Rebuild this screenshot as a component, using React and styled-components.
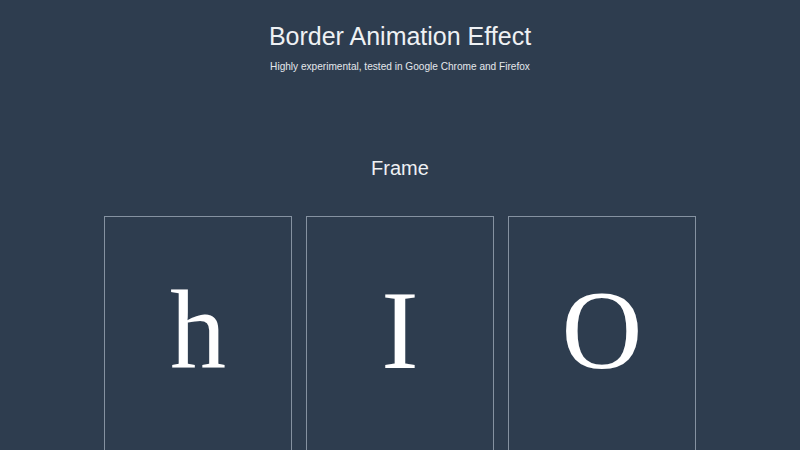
import React from "react";
import styled, { createGlobalStyle } from "styled-components";

const Global = createGlobalStyle`
  html, body {
    margin: 0;
    padding: 0;
    background: #2e3d4f;
    overflow: hidden;
  }
`;

const Page = styled.div`
  width: 800px;
  height: 450px;
  overflow: hidden;
  background: #2e3d4f;
  color: #eef1f4;
  font-family: "Liberation Sans", Arial, sans-serif;
  text-align: center;
`;

const Header = styled.header`
  padding-top: 20px;
`;

const Title = styled.h1`
  margin: 0;
  font-size: 25px;
  font-weight: 400;
  line-height: 32px;
`;

const Subtitle = styled.p`
  margin: 8px 0 0;
  font-size: 10.1px;
  line-height: 14px;
  color: #e4e8ec;
`;

const Section = styled.section`
  padding-top: 82px;
`;

const SectionTitle = styled.h2`
  margin: 0;
  font-size: 20px;
  font-weight: 400;
  line-height: 24px;
`;

const Grid = styled.div`
  display: flex;
  justify-content: center;
  gap: 14px;
  margin-top: 36px;
`;

const Box = styled.div`
  width: 186px;
  height: 260px;
  border: 1px solid #8592a1;
  box-sizing: content-box;
  display: flex;
  justify-content: center;
  padding-top: 53px;
  font-family: "Liberation Serif", "Times New Roman", serif;
  font-size: 112px;
  line-height: 120px;
  color: #ffffff;
`;

export default function App() {
  return (
    <Page>
      <Global />
      <Header>
        <Title>Border Animation Effect</Title>
        <Subtitle>Highly experimental, tested in Google Chrome and Firefox</Subtitle>
      </Header>
      <Section>
        <SectionTitle>Frame</SectionTitle>
        <Grid>
          <Box>h</Box>
          <Box>I</Box>
          <Box>O</Box>
        </Grid>
      </Section>
    </Page>
  );
}
